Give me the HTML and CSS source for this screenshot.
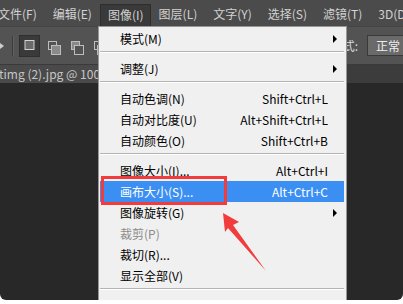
FILE: index.html
```html
<!DOCTYPE html>
<html lang="zh">
<head>
    <meta charset="UTF-8">
    <title>图像菜单</title>
    <link rel="stylesheet" href="styles.css">
</head>
<body>

<div class="app">
    <div class="menubar">
        <span class="menubar-item first">文件(F)</span>
        <span class="menubar-item">编辑(E)</span>
        <span class="menubar-item active">图像(I)</span>
        <span class="menubar-item">图层(L)</span>
        <span class="menubar-item">文字(Y)</span>
        <span class="menubar-item">选择(S)</span>
        <span class="menubar-item">滤镜(T)</span>
        <span class="menubar-item">3D(D)</span>
    </div>

    <div class="toolbar">
        <div class="tools">
            <span class="preset-arrow"></span>
            <span class="tool-sep"></span>
            <span class="tool-btn selected">
                <svg width="21" height="22" viewBox="0 0 21 22"><rect x="6" y="5.5" width="9" height="9" fill="#6a6a6a" stroke="#d4d4d4"/></svg>
            </span>
            <span class="tool-btn">
                <svg width="21" height="22" viewBox="0 0 21 22"><rect x="6.5" y="6.5" width="8" height="8" fill="none" stroke="#bdbdbd"/><rect x="9.5" y="10.5" width="9" height="9" fill="#8a8a8a" stroke="#bdbdbd"/></svg>
            </span>
            <span class="tool-btn">
                <svg width="21" height="22" viewBox="0 0 21 22"><rect x="6.5" y="6.5" width="8" height="8" fill="#8a8a8a" stroke="#bdbdbd"/><rect x="9.5" y="10.5" width="9" height="9" fill="#535353" stroke="#bdbdbd"/></svg>
            </span>
            <span class="tool-btn">
                <svg width="21" height="22" viewBox="0 0 21 22"><rect x="6.5" y="6.5" width="8" height="8" fill="none" stroke="#bdbdbd"/><rect x="9.5" y="10.5" width="9" height="9" fill="none" stroke="#bdbdbd"/></svg>
            </span>
        </div>
        <div class="style-group">
            <span class="style-label">样式:</span>
            <span class="style-box">正常</span>
        </div>
    </div>

    <div class="tabbar">
        <span class="tab">timg (2).jpg @ 100% (RGB/8)</span>
    </div>

    <div class="canvas"></div>

    <div class="dropdown">
        <div class="item sub"><span class="label">模式(M)</span><span class="arrow"></span></div>
        <div class="sep"></div>
        <div class="item sub"><span class="label">调整(J)</span><span class="arrow"></span></div>
        <div class="sep"></div>
        <div class="item"><span class="label">自动色调(N)</span><span class="key">Shift+Ctrl+L</span></div>
        <div class="item"><span class="label">自动对比度(U)</span><span class="key">Alt+Shift+Ctrl+L</span></div>
        <div class="item"><span class="label">自动颜色(O)</span><span class="key">Shift+Ctrl+B</span></div>
        <div class="sep"></div>
        <div class="item"><span class="label">图像大小(I)...</span><span class="key">Alt+Ctrl+I</span></div>
        <div class="item hover"><span class="label">画布大小(S)...</span><span class="key">Alt+Ctrl+C</span></div>
        <div class="item sub"><span class="label">图像旋转(G)</span><span class="arrow"></span></div>
        <div class="item disabled"><span class="label">裁剪(P)</span></div>
        <div class="item"><span class="label">裁切(R)...</span></div>
        <div class="item"><span class="label">显示全部(V)</span></div>
        <div class="sep"></div>
        <div class="item"><span class="label">复制(D)...</span></div>
    </div>

    <div class="mark-box"></div>
    <svg class="mark-arrow" width="403" height="304" viewBox="0 0 403 304">
        <polygon points="223,213 239,222 233,225 266,271 228,228 225,232" fill="#f23b3b"/>
    </svg>
</div>

</body>
</html>
```

FILE: styles.css
```css
body {
    margin: 0;
    background: #ffffff;
    font-family: "Noto Sans CJK SC", "Liberation Sans", sans-serif;
    font-size: 12px;
}
.app {
    position: relative;
    width: 403px;
    height: 300px;
    background: #282828;
    border-radius: 0 0 6px 6px;
    display: flex;
    flex-direction: column;
}
.menubar {
    height: 26px;
    background: #4b4b4b;
    display: flex;
    align-items: flex-end;
    overflow: hidden;
    white-space: nowrap;
    color: #d2d2d2;
}
.menubar-item {
    height: 22px;
    line-height: 20px;
    padding: 0 8px;
    box-sizing: border-box;
}
.menubar-item.first {
    margin-left: -10px;
}
.menubar-item.active {
    background: #3a3a3a;
    border: 1px solid #2e2e2e;
    border-bottom: none;
    padding: 0 6px 0 7px;
}
.toolbar {
    height: 37px;
    background: #535353;
    border-top: 1px solid #444;
    border-bottom: 1px solid #3a3a3a;
    display: flex;
    align-items: center;
    justify-content: space-between;
    overflow: hidden;
}
.tools {
    display: flex;
    align-items: center;
    gap: 2px;
}
.preset-arrow {
    width: 0;
    height: 0;
    border-left: 4px solid #cfcfcf;
    border-top: 3px solid transparent;
    border-bottom: 3px solid transparent;
}
.tool-sep {
    width: 1px;
    height: 20px;
    background: #3c3c3c;
    border-right: 1px solid #616161;
    margin: 0 3px 0 6px;
}
.tool-btn {
    width: 21px;
    height: 22px;
    display: flex;
}
.tool-btn.selected {
    background: #3a3a3a;
    box-shadow: inset 0 0 0 1px #2f2f2f;
}
.style-group {
    display: flex;
    align-items: center;
    margin-right: -20px;
    color: #dcdcdc;
}
.style-label {
    margin-right: 9px;
}
.style-box {
    width: 46px;
    height: 19px;
    line-height: 19px;
    padding-left: 8px;
    background: #6a6a6a;
    border: 1px solid #3a3a3a;
    color: #ececec;
}
.tabbar {
    height: 18px;
    background: #3c3c3c;
    display: flex;
    overflow: hidden;
}
.tab {
    background: #4a4a4a;
    color: #c6c6c6;
    line-height: 17px;
    padding: 0 10px 0 0;
    margin-left: -1px;
    white-space: nowrap;
}
.canvas {
    flex: 1;
}
.dropdown {
    position: absolute;
    left: 98px;
    top: 26px;
    width: 247px;
    height: 277px;
    padding-top: 1px;
    background: #f0f0f0;
    border: 1px solid #979797;
    border-bottom: none;
    overflow: hidden;
    color: #000;
}
.item {
    height: 21px;
    margin: 0 2px 0 1px;
    padding: 0 7px 0 20px;
    display: flex;
    align-items: center;
    white-space: nowrap;
}
.label {
    flex: 1;
}
.key {
    margin-right: 9px;
}
.arrow {
    width: 0;
    height: 0;
    border-left: 4px solid #000;
    border-top: 4px solid transparent;
    border-bottom: 4px solid transparent;
}
.item.hover {
    background: #3c8ff2;
    color: #ffffff;
}
.item.disabled {
    color: #8c8c8c;
}
.sep {
    height: 9px;
    box-sizing: border-box;
    padding-top: 2px;
    margin: 0 2px 0 1px;
}
.sep::before {
    content: "";
    display: block;
    border-top: 1px solid #b4b4b4;
    border-bottom: 1px solid #ffffff;
}
.mark-box {
    position: absolute;
    left: 101px;
    top: 176px;
    width: 120px;
    height: 23px;
    border: 3px solid #f23b3b;
}
.mark-arrow {
    position: absolute;
    left: 0;
    top: 0;
}
```
